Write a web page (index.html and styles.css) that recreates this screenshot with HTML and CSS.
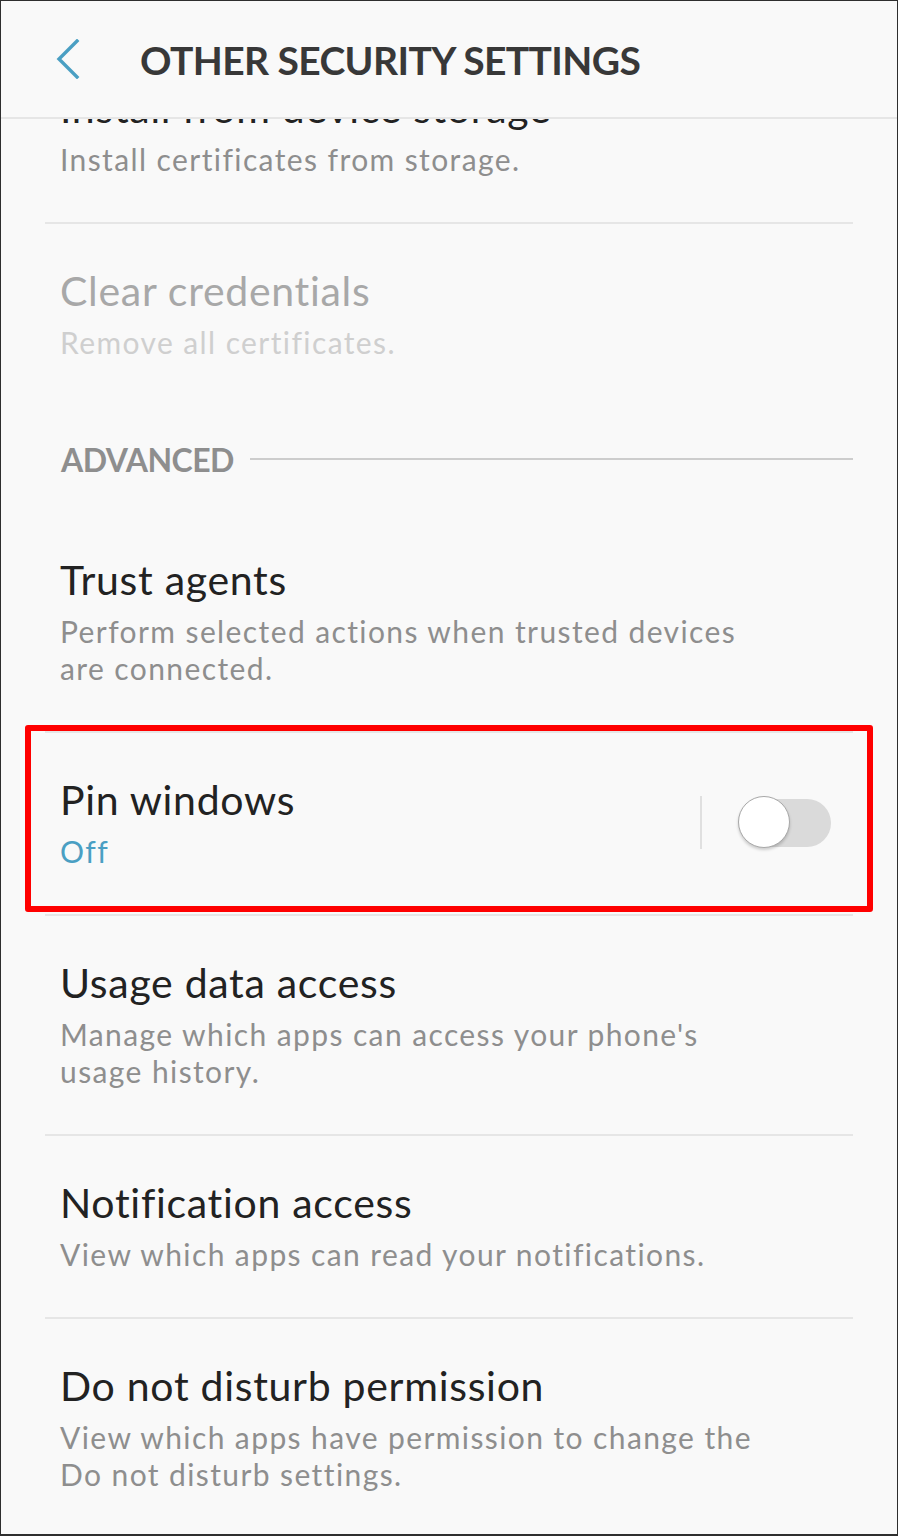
FILE: index.html
```html
<!DOCTYPE html>
<html lang="en">
<head>
    <meta charset="UTF-8">
    <meta name="viewport" content="width=device-width, initial-scale=1.0">
    <title>Other security settings</title>
    <link rel="stylesheet" href="styles.css">
</head>
<body>

    <div class="screen">

        <!-- Barra superior -->
        <header class="appbar">
            <svg class="back" width="26" height="40" viewBox="0 0 26 40">
                <path d="M21 2 L3 20 L21 38" fill="none" stroke="#4a9fc3" stroke-width="3.4" stroke-linecap="square"/>
            </svg>
            <h1 class="appbar-title">OTHER SECURITY SETTINGS</h1>
        </header>

        <!-- Lista de ajustes -->
        <div class="list">
            <div class="scroll">

                <div class="row sep">
                    <div class="title">Install from device storage</div>
                    <div class="sub">Install certificates from storage.</div>
                </div>

                <div class="row disabled">
                    <div class="title">Clear credentials</div>
                    <div class="sub">Remove all certificates.</div>
                </div>

                <div class="category">
                    <span>ADVANCED</span>
                    <div class="category-line"></div>
                </div>

                <div class="row sep">
                    <div class="title">Trust agents</div>
                    <div class="sub">Perform selected actions when trusted devices<br>are connected.</div>
                </div>

                <div class="row sep switch-row">
                    <div class="text">
                        <div class="title">Pin windows</div>
                        <div class="sub state">Off</div>
                    </div>
                    <div class="vdivider"></div>
                    <div class="toggle"><div class="knob"></div></div>
                    <div class="highlight"></div>
                </div>

                <div class="row sep">
                    <div class="title">Usage data access</div>
                    <div class="sub">Manage which apps can access your phone's<br>usage history.</div>
                </div>

                <div class="row sep">
                    <div class="title">Notification access</div>
                    <div class="sub">View which apps can read your notifications.</div>
                </div>

                <div class="row">
                    <div class="title">Do not disturb permission</div>
                    <div class="sub">View which apps have permission to change the<br>Do not disturb settings.</div>
                </div>

            </div>
        </div>
    </div>

</body>
</html>
```

FILE: styles.css
```css
/* Estilos generales */
body {
    margin: 0;
    font-family: Lato, "Noto Sans", sans-serif;
    background-color: #fff;
}

.screen {
    width: 898px;
    height: 1536px;
    box-sizing: border-box;
    border: 1px solid #2e2e2e;
    border-bottom-width: 2px;
    background-color: #f9f9f9;
    display: flex;
    flex-direction: column;
    overflow: hidden;
}

/* Barra superior */
.appbar {
    height: 116px;
    flex-shrink: 0;
    display: flex;
    align-items: center;
    padding-left: 55px;
    border-bottom: 2px solid #e6e6e6;
    position: relative;
    z-index: 1;
    background-color: #f9f9f9;
}
.back {
    margin-top: -1px;
}
.appbar-title {
    margin: 2px 0 0 58px;
    font-size: 39px;
    font-weight: 700;
    letter-spacing: -0.6px;
    color: #383838;
}

/* Lista */
.list {
    flex: 1;
    overflow: hidden;
}
.scroll {
    margin-top: -78px;
    padding: 0 44px;
}

.row {
    padding: 42px 0 44px 15px;
    position: relative;
}
.row.sep {
    border-bottom: 2px solid #e6e6e6;
}
.title {
    font-size: 41px;
    line-height: 50px;
    letter-spacing: 0.7px;
    color: #222;
}
.sub {
    margin-top: 8px;
    font-size: 30px;
    line-height: 37px;
    letter-spacing: 1.4px;
    color: #8e8e8e;
}
.disabled .title {
    color: #a8a8a8;
}
.disabled .sub {
    color: #cfcfcf;
}
.sub.state {
    color: #4a9fc3;
}

/* Cabecera de categoría */
.category {
    height: 108px;
    display: flex;
    align-items: center;
    padding-left: 16px;
    box-sizing: border-box;
}
.category span {
    font-size: 32px;
    font-weight: 700;
    color: #8e8e8e;
    letter-spacing: -0.5px;
}
.category-line {
    flex: 1;
    height: 2px;
    margin-left: 16px;
    background-color: #cdcdcd;
}

/* Fila con interruptor */
.switch-row {
    display: flex;
    align-items: center;
    padding-right: 22px;
}
.switch-row .text {
    flex: 1;
}
.vdivider {
    width: 2px;
    height: 53px;
    background-color: #e0e0e0;
    margin-right: 38px;
}
.toggle {
    width: 91px;
    height: 48px;
    border-radius: 24px;
    background-color: #dadada;
    position: relative;
}
.knob {
    position: absolute;
    left: -2px;
    top: -3px;
    width: 52px;
    height: 52px;
    box-sizing: border-box;
    border-radius: 50%;
    border: 1.5px solid #a8a8a8;
    background-color: #fff;
    box-shadow: 0 2px 3px rgba(0, 0, 0, 0.18);
}

/* Recuadro rojo */
.highlight {
    position: absolute;
    top: -8px;
    bottom: 2px;
    left: -20px;
    right: -20px;
    border: 6px solid #ff0000;
    border-radius: 3px;
}
```
